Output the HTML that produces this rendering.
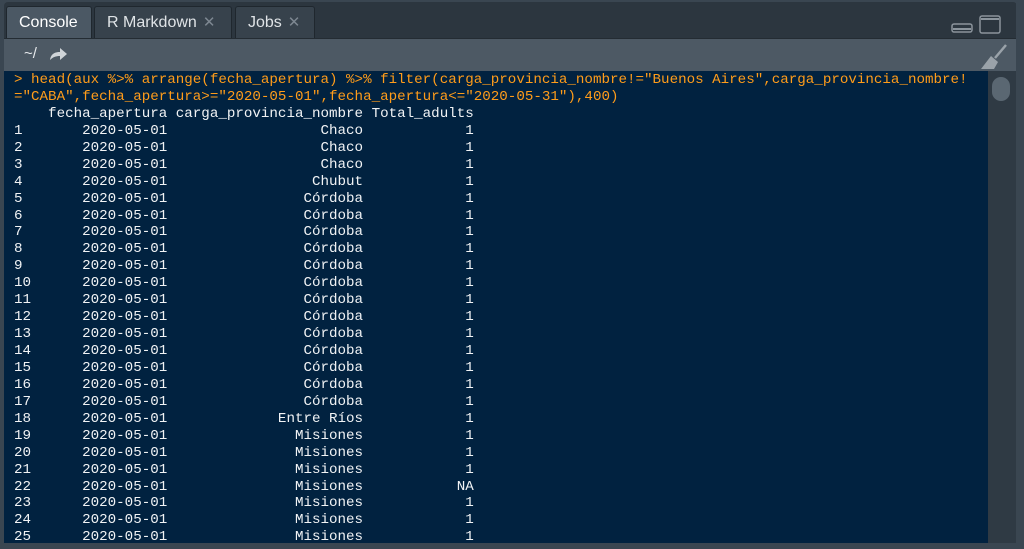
<!DOCTYPE html>
<html><head><meta charset="utf-8"><style>
*{margin:0;padding:0;box-sizing:border-box}
body{width:1024px;height:549px;background:#3a4651;position:relative;overflow:hidden;font-family:"Liberation Sans","DejaVu Sans",sans-serif}
.tabbar{position:absolute;left:4px;top:2px;width:1013px;height:36px;background:#2c363f;border-radius:4px 4px 0 0}
.tab{position:absolute;top:4px;height:32px;background:#37424c;color:#dfe3e6;font-size:16px;line-height:32px;padding-left:12px;border-radius:3px 3px 0 0;border:1px solid #1f272e;border-bottom:none}
.tab.act{background:#4b5864;color:#fff;height:34px}
.x{color:#7d8791;font-size:15px;margin-left:6px}
.toolbar{position:absolute;left:4px;top:38px;width:1013px;height:33px;background:#4d5964;border-top:1px solid #242c33}
.con{position:absolute;left:4px;top:71px;width:984px;height:472px;background:#012240;overflow:hidden}
pre{position:absolute;left:10px;top:1px;font-family:"Liberation Mono",monospace;font-size:14.2px;line-height:16.93px;color:#f1f3f5}
.o{color:#ff9c1a}
.sb{position:absolute;left:988px;top:71px;width:28px;height:472px;background:#2f3a44}
.thumb{position:absolute;left:992px;top:77px;width:18px;height:24px;border-radius:9px;background:#5a6772}
.rb{position:absolute;left:1016px;top:0;width:8px;height:549px;background:#3a4651}
</style></head><body>
<div class="tabbar">
<div class="tab act" style="left:2px;width:86px">Console</div>
<div class="tab" style="left:90px;width:138px">R Markdown<span class="x">✕</span></div>
<div class="tab" style="left:231px;width:80px">Jobs<span class="x">✕</span></div>
<svg style="position:absolute;left:946px;top:12px" width="60" height="22"><rect x="2" y="10" width="20" height="8" rx="2" fill="none" stroke="#8b949c" stroke-width="1.5"/><line x1="3" y1="15" x2="21" y2="15" stroke="#8b949c" stroke-width="2"/><rect x="30" y="2" width="20" height="17" rx="2" fill="none" stroke="#8b949c" stroke-width="1.5"/><line x1="31" y1="5" x2="49" y2="5" stroke="#8b949c" stroke-width="2"/></svg>
</div>
<div class="toolbar">
<span style="position:absolute;left:20px;top:6px;color:#e6e9ec;font-size:15px">~/</span>
<svg style="position:absolute;left:44px;top:8px" width="20" height="14"><path d="M2 13 C3 6 8 5 12 5 V1 L19 7 L12 13 V9 C8 9 5 10 2 13Z" fill="#cfd4d8"/></svg>
<svg style="position:absolute;left:974px;top:4px" width="32" height="28"><line x1="28" y1="2" x2="17" y2="15" stroke="#9aa2a9" stroke-width="2.5"/><path d="M13 13 L20 19 L16 26 L3 26 Z" fill="#9aa2a9"/></svg>
</div>
<div class="con"><pre><span class="o">&gt; head(aux %&gt;% arrange(fecha_apertura) %&gt;% filter(carga_provincia_nombre!="Buenos Aires",carga_provincia_nombre!
="CABA",fecha_apertura&gt;="2020-05-01",fecha_apertura&lt;="2020-05-31"),400)</span>
    fecha_apertura carga_provincia_nombre Total_adults
1       2020-05-01                  Chaco            1
2       2020-05-01                  Chaco            1
3       2020-05-01                  Chaco            1
4       2020-05-01                 Chubut            1
5       2020-05-01                Córdoba            1
6       2020-05-01                Córdoba            1
7       2020-05-01                Córdoba            1
8       2020-05-01                Córdoba            1
9       2020-05-01                Córdoba            1
10      2020-05-01                Córdoba            1
11      2020-05-01                Córdoba            1
12      2020-05-01                Córdoba            1
13      2020-05-01                Córdoba            1
14      2020-05-01                Córdoba            1
15      2020-05-01                Córdoba            1
16      2020-05-01                Córdoba            1
17      2020-05-01                Córdoba            1
18      2020-05-01             Entre Ríos            1
19      2020-05-01               Misiones            1
20      2020-05-01               Misiones            1
21      2020-05-01               Misiones            1
22      2020-05-01               Misiones           NA
23      2020-05-01               Misiones            1
24      2020-05-01               Misiones            1
25      2020-05-01               Misiones            1
</pre></div>
<div class="sb"></div><div class="thumb"></div>
<div class="rb"></div>
</body></html>
